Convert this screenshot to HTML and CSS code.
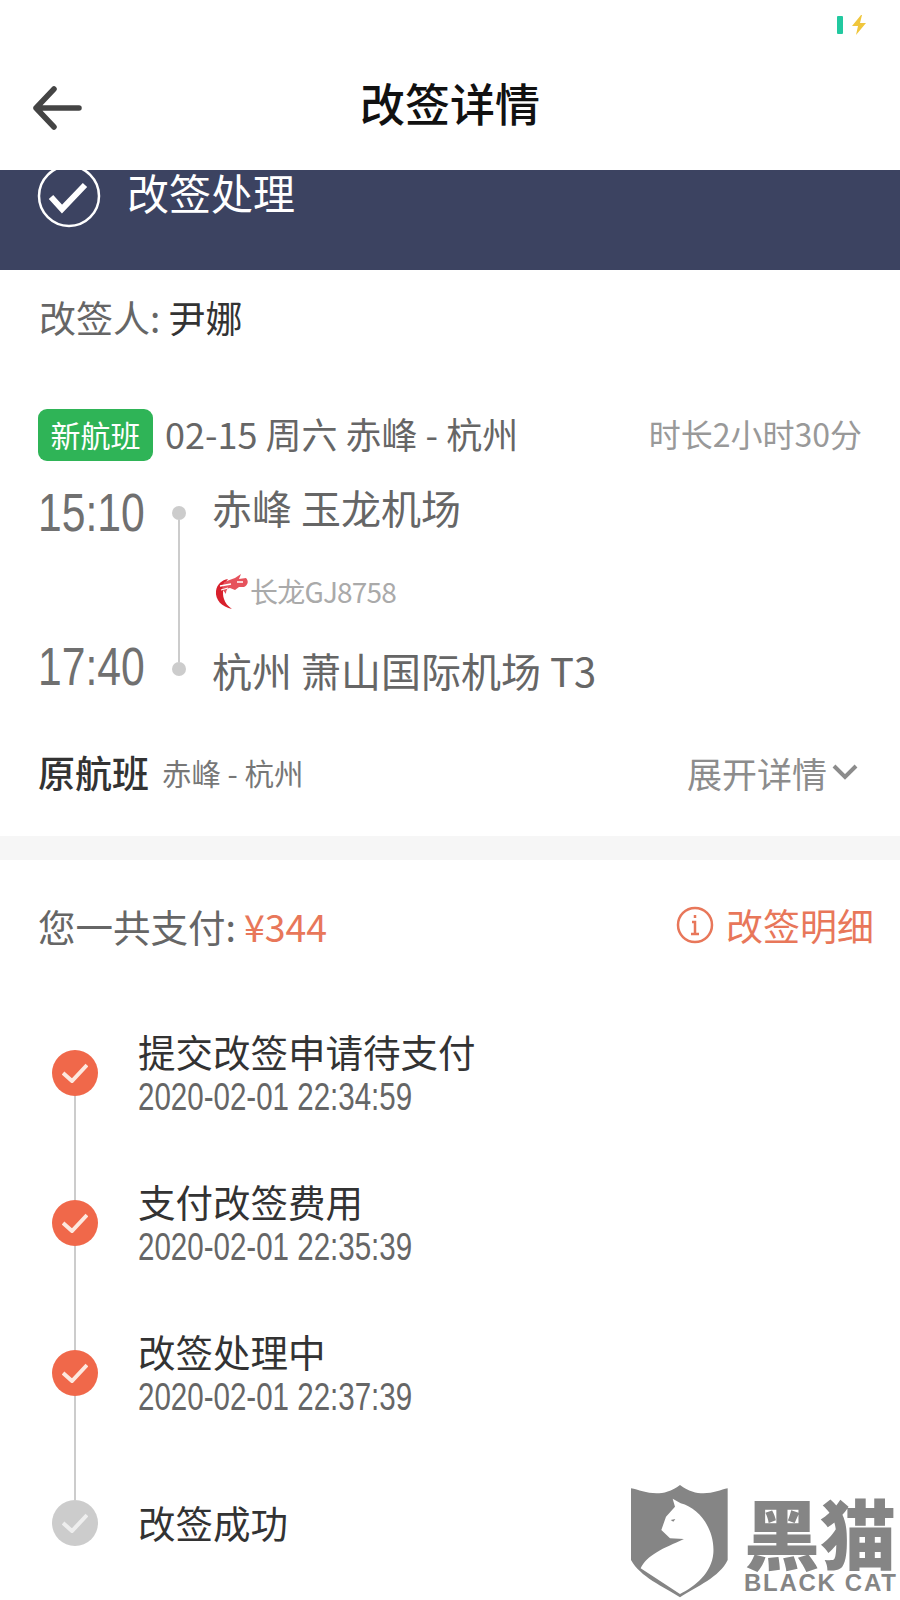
FILE: index.html
```html
<!DOCTYPE html>
<html>
<head>
    <title>改签详情</title>
    <link rel="stylesheet" href="styles.css">
</head>
<body>
    <div class="page">
        <div class="status">
            <span class="battery"></span>
            <svg class="bolt" width="18" height="20" viewBox="0 0 18 20"><path d="M11 0L2 11h6l-2 9 10-12h-6l2-8z" fill="#f0c63c"/></svg>
        </div>
        <div class="nav">
            <svg class="back" width="50" height="44" viewBox="0 0 50 44"><path d="M22 3L4 22l18 19M4 22h43" fill="none" stroke="#444" stroke-width="5.5" stroke-linecap="round" stroke-linejoin="round"/></svg>
            <div class="nav-title">改签详情</div>
        </div>
        <div class="banner">
            <svg class="banner-icon" width="64" height="58" viewBox="0 6 64 58"><circle cx="32" cy="32" r="30" fill="none" stroke="#fff" stroke-width="2.5"/><path d="M14 33l11 12L48 21" fill="none" stroke="#fff" stroke-width="6"/></svg>
            <div class="banner-text">改签处理</div>
        </div>

        <div class="passenger"><span class="muted">改签人:</span> <span class="dark">尹娜</span></div>

        <div class="flight-head">
            <span class="tag">新航班</span>
            <span class="flight-date">02-15 周六 赤峰 - 杭州</span>
            <span class="duration">时长2小时30分</span>
        </div>

        <div class="route">
            <div class="time time-top"><span>15:10</span></div>
            <div class="axis"><span class="dot"></span><span class="axis-line"></span><span class="dot"></span></div>
            <div class="airport airport-top">赤峰 玉龙机场</div>
            <div class="airline">
                <svg width="34" height="36" viewBox="0 0 34 36">
                    <path d="M17 36C7 34 0 27 1 18 2 11 7 7 13 6 8 12 7 20 9 26 10 30 13 33 17 36z" fill="#d8202c"/>
                    <path d="M9 9L20 5 26 1 24 6 31 5C34 8 33 12 29 14L24 14 20 17 15 15C12 15 11 18 11 21L7 16z" fill="#e6525c"/>
                    <path d="M5 13l11-2M6 17l7-2M22 9l6 0" stroke="#fff" stroke-width="1.3" fill="none"/>
                </svg>
                <span>长龙GJ8758</span>
            </div>
            <div class="time time-bottom"><span>17:40</span></div>
            <div class="airport airport-bottom">杭州 萧山国际机场 T3</div>
        </div>

        <div class="origin">
            <span class="origin-label">原航班</span>
            <span class="origin-city">赤峰 - 杭州</span>
            <span class="expand">展开详情<svg width="28" height="18" viewBox="0 0 28 18"><path d="M3 3l11 11L25 3" fill="none" stroke="#8c8c8c" stroke-width="4"/></svg></span>
        </div>

        <div class="divider"></div>

        <div class="pay">
            <span class="muted">您一共支付:</span>
            <span class="price">¥344</span>
            <span class="detail">
                <svg width="38" height="38" viewBox="0 0 38 38"><circle cx="19" cy="19" r="17" fill="none" stroke="#e8775a" stroke-width="2.5"/><path d="M19 9v3M16 16h3v12M15 28h8" fill="none" stroke="#e8775a" stroke-width="2.5"/></svg>
                改签明细
            </span>
        </div>

        <div class="steps">
            <div class="step">
                <div class="mark"><span class="check"><svg width="26" height="20" viewBox="0 0 26 20"><path d="M1 10l9 8L25 2" fill="none" stroke="#fde8df" stroke-width="4"/></svg></span></div>
                <div class="step-body"><div class="step-title">提交改签申请待支付</div><div class="step-time"><span>2020-02-01 22:34:59</span></div></div>
            </div>
            <div class="step">
                <div class="mark"><span class="check"><svg width="26" height="20" viewBox="0 0 26 20"><path d="M1 10l9 8L25 2" fill="none" stroke="#fde8df" stroke-width="4"/></svg></span></div>
                <div class="step-body"><div class="step-title">支付改签费用</div><div class="step-time"><span>2020-02-01 22:35:39</span></div></div>
            </div>
            <div class="step">
                <div class="mark"><span class="check"><svg width="26" height="20" viewBox="0 0 26 20"><path d="M1 10l9 8L25 2" fill="none" stroke="#fde8df" stroke-width="4"/></svg></span></div>
                <div class="step-body"><div class="step-title">改签处理中</div><div class="step-time"><span>2020-02-01 22:37:39</span></div></div>
            </div>
            <div class="step step-last">
                <div class="mark"><span class="check check-off"><svg width="26" height="20" viewBox="0 0 26 20"><path d="M1 10l9 8L25 2" fill="none" stroke="#eee" stroke-width="4"/></svg></span></div>
                <div class="step-body"><div class="step-title">改签成功</div></div>
            </div>
        </div>

        <div class="watermark">
            <svg width="110" height="130" viewBox="0 0 330 390">
                <path d="M33 55C70 62 120 90 180 45 240 90 290 62 323 55V270C300 320 230 350 180 382 130 350 60 320 33 270z" fill="#858585"/>
                <path d="M158 86L182 100C240 115 285 180 280 250 275 310 225 350 180 372L62 295C80 255 130 235 192 207L150 205 124 180 138 140 165 110z" fill="#fff"/>
                <path d="M152 150l14-3-6 8z" fill="#858585"/>
            </svg>
            <div class="mark-text">
                <div class="mark-cn">黑猫</div>
                <div class="mark-en">BLACK CAT</div>
            </div>
        </div>
    </div>
</body>
</html>
```

FILE: styles.css
```css
* {
    box-sizing: border-box;
}
body {
    margin: 0;
    background: #fff;
    font-family: "Noto Sans CJK SC", "Noto Sans", sans-serif;
}
.page {
    position: relative;
    width: 900px;
    height: 1600px;
    overflow: hidden;
}
.status {
    display: flex;
    justify-content: flex-end;
    align-items: center;
    gap: 7px;
    height: 50px;
    padding: 14px 32px 14px 0;
}
.battery {
    width: 6px;
    height: 18px;
    background: #22c9a0;
    border-radius: 1px;
}
.nav {
    display: grid;
    grid-template-columns: 1fr auto 1fr;
    align-items: center;
    height: 120px;
    padding-bottom: 14px;
}
.back {
    margin: 10px 0 0 32px;
}
.nav-title {
    font-size: 45px;
    font-weight: 500;
    line-height: 60px;
    color: #111;
}
.banner {
    display: flex;
    gap: 26px;
    height: 100px;
    padding-left: 37px;
    background: #3c4361;
}
.banner-text {
    font-size: 42px;
    line-height: 44px;
    color: #fff;
}
.passenger {
    height: 96px;
    padding-left: 39px;
    font-size: 37px;
    line-height: 94px;
}
.muted {
    color: #666;
}
.dark {
    color: #333;
}
.flight-head {
    display: flex;
    align-items: center;
    height: 52px;
    margin-top: 43px;
    padding: 0 38px;
}
.tag {
    width: 115px;
    height: 52px;
    margin-right: 12px;
    background: #2fb457;
    border-radius: 9px;
    font-size: 30px;
    line-height: 50px;
    text-align: center;
    color: #fff;
}
.flight-date {
    padding-bottom: 4px;
    font-size: 36px;
    color: #666;
    white-space: nowrap;
}
.duration {
    margin-left: auto;
    padding-bottom: 4px;
    font-size: 32px;
    color: #999;
}
.route {
    display: grid;
    grid-template-columns: 127px 28px 1fr;
    grid-template-rows: 40px 116px 40px;
    margin-top: 32px;
    padding-left: 38px;
    align-items: center;
}
.time {
    grid-column: 1;
    font-family: "Liberation Sans", sans-serif;
    font-size: 54px;
    line-height: 40px;
    color: #707070;
}
.time span,
.step-time span {
    display: inline-block;
    transform-origin: left center;
}
.time span {
    transform: scaleX(0.79);
}
.time-top {
    grid-row: 1;
    margin-bottom: 2px;
}
.time-bottom {
    grid-row: 3;
    margin-bottom: 6px;
}
.axis {
    grid-column: 2;
    grid-row: 1 / 4;
    align-self: stretch;
    display: flex;
    flex-direction: column;
    align-items: center;
    padding: 13px 0;
}
.dot {
    width: 14px;
    height: 14px;
    border-radius: 50%;
    background: #ccc;
}
.axis-line {
    flex: 1;
    width: 2px;
    background: #ccc;
}
.airport {
    grid-column: 3;
    padding-left: 19px;
    font-size: 40px;
    line-height: 40px;
    color: #666;
    white-space: nowrap;
}
.airport-top {
    grid-row: 1;
    margin-bottom: 12px;
}
.airport-bottom {
    grid-row: 3;
    margin-top: 2px;
}
.airline {
    grid-column: 3;
    grid-row: 2;
    display: flex;
    align-items: center;
    gap: 1px;
    padding-left: 22px;
    font-size: 28px;
    letter-spacing: -0.8px;
    color: #aaa;
}
.origin {
    display: flex;
    align-items: center;
    height: 60px;
    margin-top: 56px;
    padding: 0 41px 6px 38px;
}
.origin-label {
    font-size: 37px;
    font-weight: 500;
    color: #333;
    margin-right: 13px;
}
.origin-city {
    font-size: 29.5px;
    color: #777;
}
.expand {
    display: flex;
    align-items: center;
    gap: 4px;
    margin-left: auto;
    font-size: 35px;
    color: #8c8c8c;
}
.divider {
    height: 24px;
    margin-top: 31px;
    background: #f6f6f6;
}
.pay {
    display: flex;
    align-items: center;
    gap: 8px;
    height: 60px;
    margin-top: 38px;
    padding: 0 26px 6px 38px;
    font-size: 37.5px;
}
.price {
    color: #e8775a;
}
.detail {
    display: flex;
    align-items: center;
    gap: 12px;
    margin-left: auto;
    font-size: 37px;
    color: #e8775a;
}
.steps {
    margin-top: 73px;
    padding-left: 52px;
}
.step {
    display: flex;
    gap: 40px;
    height: 150px;
}
.mark {
    display: flex;
    flex-direction: column;
    align-items: center;
    width: 46px;
}
.mark::before {
    content: "";
    height: 19px;
    width: 2px;
    background: #ccc;
}
.mark::after {
    content: "";
    flex: 1;
    width: 2px;
    background: #ccc;
}
.step:first-child .mark::before {
    background: none;
}
.step-last .mark::after {
    background: none;
}
.check {
    display: flex;
    align-items: center;
    justify-content: center;
    width: 46px;
    height: 46px;
    border-radius: 50%;
    background: #f0684a;
}
.check-off {
    background: #ccc;
}
.step-title {
    margin: -2px 0 2px;
    font-size: 37.5px;
    line-height: 44px;
    color: #333;
    white-space: nowrap;
}
.step-time {
    font-family: "Liberation Sans", sans-serif;
    font-size: 38px;
    line-height: 44px;
    color: #666;
    white-space: nowrap;
}
.step-time span {
    transform: scaleX(0.777);
}
.step-last .step-body {
    margin-top: 21px;
}
.watermark {
    position: absolute;
    left: 620px;
    top: 1470px;
    display: flex;
    width: 280px;
    height: 130px;
    gap: 14px;
}
.mark-text {
    padding-top: 24px;
    color: #858585;
}
.mark-cn {
    font-size: 76px;
    font-weight: 900;
    line-height: 75px;
    white-space: nowrap;
}
.mark-en {
    font-family: "Liberation Sans", sans-serif;
    font-size: 24px;
    font-weight: bold;
    letter-spacing: 1.7px;
    white-space: nowrap;
}
```
